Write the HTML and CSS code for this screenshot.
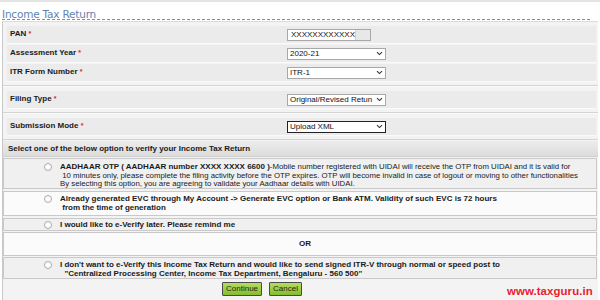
FILE: index.html
```html
<!DOCTYPE html>
<html>
<head>
<meta charset="utf-8">
<link rel="stylesheet" href="styles.css">
</head>
<body>
<div class="page">
  <div class="title">Income Tax Return</div>
  <div class="panel">
    <div class="group first">
      <div class="row">
        <div class="label">PAN <span class="req">*</span></div>
        <div class="field"><div class="input pan"><span class="val">XXXXXXXXXXXX</span><span class="pad"></span></div></div>
      </div>
      <div class="row">
        <div class="label">Assessment Year <span class="req">*</span></div>
        <div class="field"><div class="select"><span class="val">2020-21</span><svg class="chev" width="7" height="5" viewBox="0 0 7 5"><path d="M1 1.2 L3.5 3.6 L6 1.2" fill="none" stroke="#333" stroke-width="1.1"/></svg></div></div>
      </div>
      <div class="row">
        <div class="label">ITR Form Number <span class="req">*</span></div>
        <div class="field"><div class="select"><span class="val">ITR-1</span><svg class="chev" width="7" height="5" viewBox="0 0 7 5"><path d="M1 1.2 L3.5 3.6 L6 1.2" fill="none" stroke="#333" stroke-width="1.1"/></svg></div></div>
      </div>
    </div>
    <div class="group">
      <div class="row">
        <div class="label">Filing Type <span class="req">*</span></div>
        <div class="field"><div class="select"><span class="val">Original/Revised Retun</span><svg class="chev" width="7" height="5" viewBox="0 0 7 5"><path d="M1 1.2 L3.5 3.6 L6 1.2" fill="none" stroke="#333" stroke-width="1.1"/></svg></div></div>
      </div>
    </div>
    <div class="group">
      <div class="row">
        <div class="label">Submission Mode <span class="req">*</span></div>
        <div class="field"><div class="select focus"><span class="val">Upload XML</span><svg class="chev" width="7" height="5" viewBox="0 0 7 5"><path d="M1 1.2 L3.5 3.6 L6 1.2" fill="none" stroke="#333" stroke-width="1.1"/></svg></div></div>
      </div>
    </div>
    <div class="head">Select one of the below option to verify your Income Tax Return</div>
    <div class="options">
      <div class="opt gray h1">
        <span class="radio"></span>
        <div class="txt"><b>AADHAAR OTP ( AADHAAR number XXXX XXXX 6600 )</b>-Mobile number registered with UIDAI will receive the OTP from UIDAI and it is valid for<br>&nbsp;10 minutes only, please complete the filing activity before the OTP expires. OTP will become invalid in case of logout or moving to other functionalities<br>By selecting this option, you are agreeing to validate your Aadhaar details with UIDAI.</div>
      </div>
      <div class="opt white h2">
        <span class="radio"></span>
        <div class="txt"><b>Already generated EVC through My Account -&gt; Generate EVC option or Bank ATM. Validity of such EVC is 72 hours<br>&nbsp;from the time of generation</b></div>
      </div>
      <div class="opt gray h3">
        <span class="radio"></span>
        <div class="txt"><b>I would like to e-Verify later. Please remind me</b></div>
      </div>
      <div class="opt white or"><b>OR</b></div>
      <div class="opt gray h5">
        <span class="radio"></span>
        <div class="txt"><b>I don't want to e-Verify this Income Tax Return and would like to send signed ITR-V through normal or speed post to<br>&nbsp;&nbsp;"Centralized Processing Center, Income Tax Department, Bengaluru - 560 500"</b></div>
      </div>
    </div>
    <div class="buttons">
      <button class="btn">Continue</button>
      <button class="btn">Cancel</button>
    </div>
  </div>
  <div class="watermark">www.taxguru.in</div>
</div>
</body>
</html>
```
FILE: styles.css
```css
html, body {
  margin: 0;
  padding: 0;
  background: #ffffff;
}
body {
  width: 600px;
  height: 300px;
  overflow: hidden;
  font-family: "Liberation Sans", Arial, sans-serif;
  color: #1a1a1a;
}
.page {
  position: relative;
  height: 300px;
  border-top: 2px solid #e4e4e4;
  box-sizing: border-box;
}
.title {
  margin: 0 10px 0 2px;
  padding-top: 7px;
  height: 10px;
  line-height: 10px;
  font-family: "DejaVu Sans", sans-serif;
  font-size: 10.5px;
  letter-spacing: -0.2px;
  color: #5f84b0;
  border-bottom: 1px dashed #8a8a8a;
}
.panel {
  margin: 1px 2px 0 2px;
  border-left: 1px solid #c8c8c8;
  border-top: 1px solid #dcdcdc;
  background: #f3f3f3;
  height: 280px;
}
.group {
  padding: 4px 2px 3px 4px;
  border-top: 1px solid #fbfbfb;
  border-bottom: 1px solid #d4d4d4;
}
.group.first {
  border-top: none;
  padding-top: 4px;
}
.row {
  display: flex;
  height: 17px;
  background: #ebebeb;
  border-bottom: 1px solid #fafafa;
  margin-bottom: 1px;
}
.group .row:last-child {
  margin-bottom: 0;
}
.label {
  width: 277px;
  padding-left: 3px;
  padding-top: 3px;
  font-size: 8px;
  line-height: 10px;
  font-weight: bold;
  color: #1a1a1a;
}
.req {
  color: #d9262c;
  font-size: 7px;
}
.field {
  padding-top: 2.5px;
}
.input, .select {
  height: 12px;
  box-sizing: border-box;
  border: 1px solid #a8a8a8;
  background: #fff;
  font-size: 8px;
  line-height: 10px;
  display: flex;
  align-items: center;
  color: #111;
}
.input.pan {
  width: 84px;
  padding-left: 3px;
  justify-content: space-between;
}
.input.pan .pad {
  width: 17px;
  height: 10px;
  background: #e8e8e8;
  border-left: 1px solid #d0d0d0;
}
.select {
  width: 99px;
  padding-left: 2px;
  justify-content: space-between;
}
.select .chev {
  margin-right: 2px;
}
.select.focus {
  border-color: #222;
}
.head {
  height: 15px;
  margin-top: 1px;
  padding-left: 5px;
  font-size: 8px;
  line-height: 15px;
  font-weight: bold;
  color: #1a1a1a;
  background: linear-gradient(#ececec, #dcdcdc);
  border-bottom: 1px solid #cfcfcf;
}
.options {
  padding: 1px 1px 0 0;
}
.opt {
  display: flex;
  align-items: flex-start;
  border: 1px solid #c9c9c9;
  margin-bottom: 2px;
  box-sizing: border-box;
  font-size: 7.8px;
  line-height: 8.5px;
  color: #1a1a1a;
}
.opt.gray { background: #f0f0f0; }
.opt.white { background: #fbfbfb; }
.opt b { font-weight: bold; font-size: 8px; }
.opt.h1 { height: 31px; padding-top: 4px; }
.opt.h2 { height: 25px; padding-top: 3px; }
.opt.h3 { height: 13px; padding-top: 2px; margin-bottom: 1px; }
.opt.or { height: 24px; justify-content: center; align-items: center; padding-left: 10px; margin-bottom: 1px; }
.opt.h5 { height: 22px; padding-top: 3px; margin-bottom: 0; }
.radio {
  width: 8px;
  height: 8px;
  box-sizing: border-box;
  border: 1px solid #a9a9a9;
  border-radius: 50%;
  background: #fff;
  margin: 0 8px 0 40px;
  flex: none;
}
.txt {
  white-space: nowrap;
}
.buttons {
  display: flex;
  gap: 7px;
  padding: 3px 0 0 219px;
}
.btn {
  height: 14px;
  padding: 0 3px;
  font-family: "Liberation Sans", Arial, sans-serif;
  font-size: 8px;
  line-height: 12px;
  color: #1d2a0c;
  background: linear-gradient(#b6dc62, #86bb2e);
  border: 1px solid #4a4a4a;
  border-radius: 1px;
}
.watermark {
  position: absolute;
  left: 507px;
  top: 283px;
  font-size: 11.4px;
  font-weight: bold;
  color: #e8202a;
  letter-spacing: 0.1px;
}
```
